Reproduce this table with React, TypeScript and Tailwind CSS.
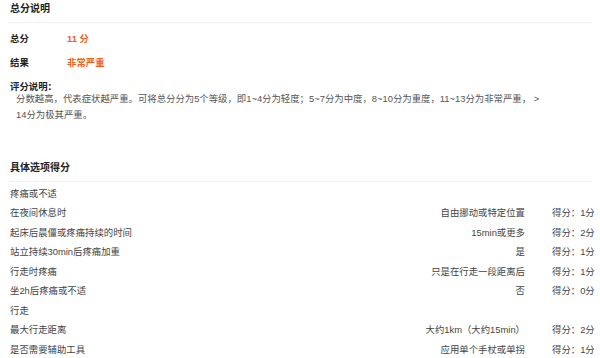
const font = "font-['Liberation_Sans','Noto_Sans_CJK_SC',sans-serif]"

interface ItemRow {
  label: string
  answer?: string
  score?: number
}

const rows: ItemRow[] = [
  { label: '疼痛或不适' },
  { label: '在夜间休息时', answer: '自由挪动或特定位置', score: 1 },
  { label: '起床后晨僵或疼痛持续的时间', answer: '15min或更多', score: 2 },
  { label: '站立持续30min后疼痛加重', answer: '是', score: 1 },
  { label: '行走时疼痛', answer: '只是在行走一段距离后', score: 1 },
  { label: '坐2h后疼痛或不适', answer: '否', score: 0 },
  { label: '行走' },
  { label: '最大行走距离', answer: '大约1km（大约15min）', score: 2 },
  { label: '是否需要辅助工具', answer: '应用单个手杖或单拐', score: 1 },
]

function SectionTitle({ children }: { children: string }) {
  return (
    <div className="border-b border-dotted border-[#e6e6e6] pb-[5px] pt-[1px]">
      <h2 className="text-[10px] font-bold leading-[16px] text-[#222]">{children}</h2>
    </div>
  )
}

export default function App() {
  return (
    <div className={`${font} h-[358px] w-[600px] overflow-hidden bg-white pl-[10px] pr-[8px] text-[#444]`}>
      <SectionTitle>总分说明</SectionTitle>

      <div className="mt-[4px] flex h-[24px] items-center text-[9.4px] font-bold">
        <span className="w-[57px] text-[#222]">总分</span>
        <span className="text-[#f0601e]">11 分</span>
      </div>
      <div className="flex h-[24px] items-center text-[9.4px] font-bold">
        <span className="w-[57px] text-[#222]">结果</span>
        <span className="text-[#f0601e]">非常严重</span>
      </div>

      <div className="mt-[5px] text-[9.4px] font-bold leading-[14px] text-[#222]">评分说明：</div>
      <p className="-mt-[3px] pl-[6px] text-[9.4px] leading-[16px] text-[#555]">
        分数越高，代表症状越严重。可将总分分为5个等级，即1~4分为轻度；5~7分为中度，8~10分为重度，11~13分为非常严重， &gt;
        <br />
        14分为极其严重。
      </p>

      <div className="mt-[36px]">
        <SectionTitle>具体选项得分</SectionTitle>
      </div>

      <div className="pt-[2px]">
        {rows.map((row) => (
          <div key={row.label} className="flex h-[19.5px] items-center text-[9.4px] text-[#444]">
            <span className="flex-1">{row.label}</span>
            {row.answer && <span className="text-right whitespace-nowrap">{row.answer}</span>}
            {row.score !== undefined && (
              <span className="w-[67px] shrink-0 whitespace-nowrap pl-[27px]">得分：{row.score}分</span>
            )}
          </div>
        ))}
      </div>
    </div>
  )
}
